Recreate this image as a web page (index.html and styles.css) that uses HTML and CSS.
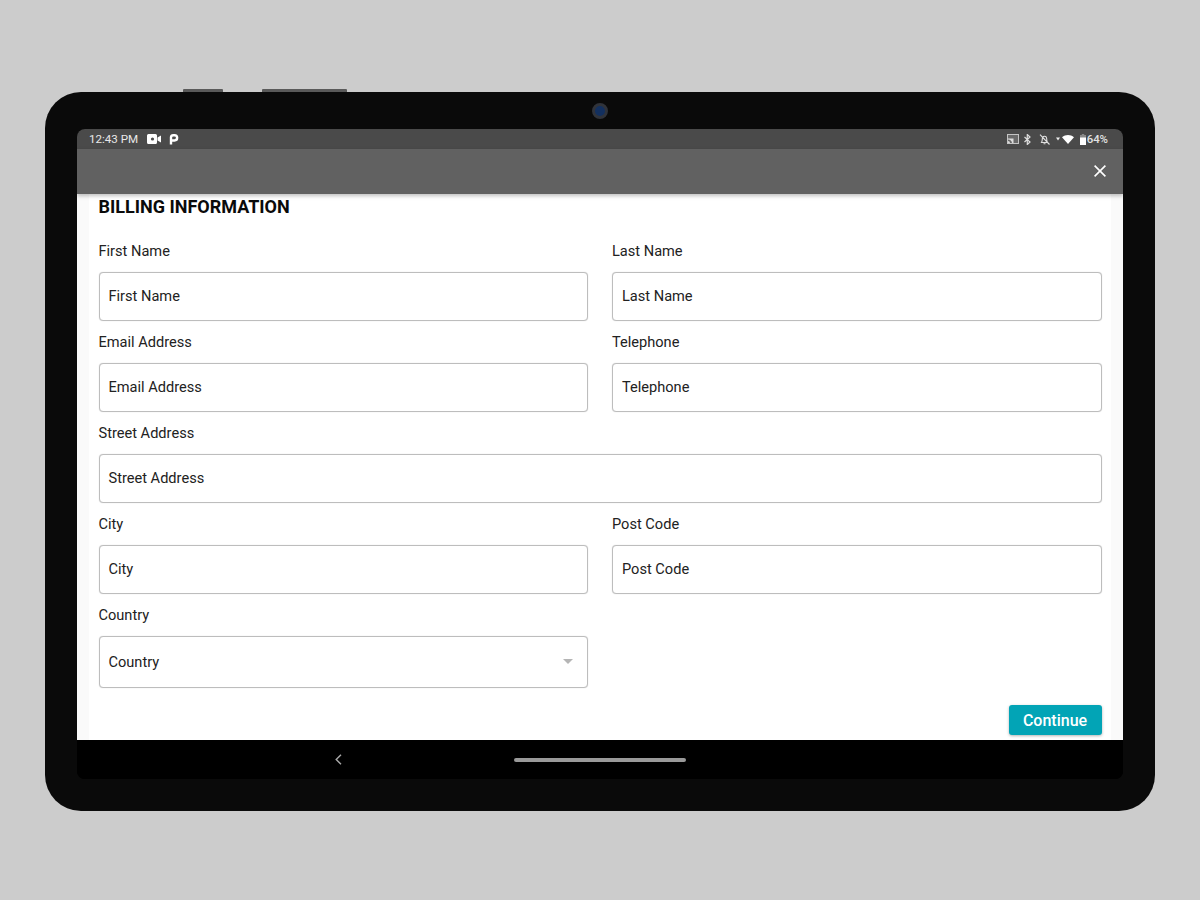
FILE: index.html
```html
<!DOCTYPE html>
<html lang="en">
<head>
<meta charset="utf-8">
<title>Billing Information</title>
<link rel="stylesheet" href="styles.css">
</head>
<body>
<div class="tablet">
  <span class="hw-btn hw-btn-a"></span>
  <span class="hw-btn hw-btn-b"></span>
  <span class="camera"></span>
  <div class="screen">
    <div class="status">
      <div class="status-left">
        <span class="time">12:43 PM</span>
        <svg class="ic-video" width="14" height="10" viewBox="0 0 14 10"><path fill="#fff" d="M1.500 0h7A1.500 1.500 0 0 1 10 1.500v7A1.500 1.500 0 0 1 8.500 10h-7A1.500 1.500 0 0 1 0 8.500v-7A1.500 1.500 0 0 1 1.500 0zM10.500 3.500 14 1.500v7l-3.500-2z"/><circle cx="5.500" cy="5" r="1.600" fill="#4a4a4a"/></svg>
        <svg class="ic-p" width="10" height="11" viewBox="0 0 10 11"><path fill="none" stroke="#fff" stroke-width="2.400" d="M2 10.500V3.200A2.200 2.200 0 0 1 4.200 1.200h1.300a2.500 2.500 0 0 1 0 5.300H3"/></svg>
      </div>
      <div class="status-right">
        <svg width="12" height="10" viewBox="0 0 12 10"><rect x=".5" y=".5" width="11" height="9" fill="#6a6a6a" stroke="#c4c4c4"/><path fill="#dcdcdc" d="M1 4.500h5.500V9H5A4 4 0 0 0 1 5.500zM1 7a2 2 0 0 1 2 2H1z"/></svg>
        <svg class="ic-bt" width="7" height="11" viewBox="0 0 7 11"><path fill="none" stroke="#ddd" stroke-width="1.200" d="M.5 3l5.500 5-2.700 2.500V.5L6 3 .5 8"/></svg>
        <svg class="ic-bell" width="11" height="11" viewBox="0 0 11 11"><path fill="none" stroke="#ddd" stroke-width="1.100" d="M2.500 8.500c.6-1 .8-1.800.8-3.500 0-1.600 1-2.800 2.200-2.800s2.200 1.200 2.200 2.800c0 1.700.2 2.500.8 3.500zM4.500 9.700h2M1 .7l9.500 9.800"/></svg>
        <svg class="ic-dot" width="4" height="4" viewBox="0 0 4 4"><path fill="#eee" d="M0 .5h4L2 3.500z"/></svg>
        <svg class="ic-wifi" width="12" height="9" viewBox="0 0 12 9"><path fill="#fff" d="M0 2.300C3.500-.7 8.500-.7 12 2.300L6 9z"/></svg>
        <svg class="ic-batt" width="6" height="11" viewBox="0 0 6 11"><path fill="#888" d="M1.800 0h2.400v1H6v4H0V1h1.800z"/><path fill="#fff" d="M0 3.500h6V11H0z"/></svg>
        <span class="pct">64%</span>
      </div>
    </div>
    <div class="appbar">
      <svg class="close" width="12" height="12" viewBox="0 0 12 12"><path stroke="#fff" stroke-width="1.600" d="M.6.600l10.800 10.800M11.400.600.600 11.400"/></svg>
    </div>
    <div class="content">
      <form class="sheet">
        <h2 class="title">BILLING INFORMATION</h2>
        <div class="grid">
          <div class="field"><label class="label">First Name</label><div class="input">First Name</div></div>
          <div class="field"><label class="label">Last Name</label><div class="input">Last Name</div></div>
          <div class="field"><label class="label">Email Address</label><div class="input">Email Address</div></div>
          <div class="field"><label class="label">Telephone</label><div class="input">Telephone</div></div>
          <div class="field wide"><label class="label">Street Address</label><div class="input">Street Address</div></div>
          <div class="field"><label class="label">City</label><div class="input">City</div></div>
          <div class="field"><label class="label">Post Code</label><div class="input">Post Code</div></div>
          <div class="field"><label class="label">Country</label><div class="input select">Country<span class="caret"></span></div></div>
        </div>
        <div class="actions"><button type="button" class="continue">Continue</button></div>
      </form>
    </div>
    <div class="nav">
      <svg class="back" width="7" height="11" viewBox="0 0 7 11"><path fill="none" stroke="#aaa" stroke-width="1.400" d="M6 .7 1.200 5.500 6 10.300"/></svg>
      <span class="home"></span>
    </div>
  </div>
</div>
</body>
</html>
```
FILE: styles.css
```css
* { box-sizing: border-box; }
html, body { margin: 0; height: 100%; }
body {
  background: #cccccc;
  padding-top: 92px;
  font-family: Roboto, "Liberation Sans", sans-serif;
  overflow: hidden;
}
.tablet {
  position: relative;
  width: 1110px;
  height: 719px;
  margin: 0 auto;
  padding: 37px 32px 32px;
  background: #0a0a0a;
  border-radius: 36px;
}
.hw-btn {
  position: absolute;
  top: -3px;
  height: 3px;
  background: #5a5a5a;
  border-radius: 1px 1px 0 0;
}
.hw-btn-a { left: 138px; width: 40px; }
.hw-btn-b { left: 217px; width: 85px; }
.camera {
  position: absolute;
  left: 547px;
  top: 11px;
  width: 16px;
  height: 16px;
  border-radius: 50%;
  background: #13305f;
  border: 3px solid #30333a;
}
.screen {
  display: flex;
  flex-direction: column;
  height: 650px;
  border-radius: 8px;
  overflow: hidden;
  background: #000;
}
.status {
  flex: none;
  height: 20px;
  display: flex;
  align-items: center;
  justify-content: space-between;
  padding: 0 15px 0 12px;
  background: #4a4a4a;
  color: #e8e8e8;
  font-size: 11.600px;
}
.status-left, .status-right { display: flex; align-items: center; }
.status svg { flex: none; }
.time { margin-right: 9px; }
.ic-p { margin-left: 8px; }
.ic-bt { margin-left: 5px; }
.ic-bell { margin-left: 8px; }
.ic-dot { margin-left: 6px; }
.ic-wifi { margin-left: 2px; }
.ic-batt { margin-left: 6px; }
.pct { margin-left: 1px; color: #e2e2e2; font-size: 11.400px; font-weight: 500; white-space: nowrap; }
.appbar {
  flex: none;
  height: 45px;
  display: flex;
  align-items: center;
  justify-content: flex-end;
  padding: 0 17px 2px;
  background: #616161;
  box-shadow: 0 2px 4px rgba(0, 0, 0, .25);
  position: relative;
  z-index: 1;
}
.content {
  flex: none;
  height: 546px;
  overflow: hidden;
  padding: 0 12px;
  background: #fafafa;
}
.sheet {
  height: 100%;
  padding: 0 9.500px;
  background: #fff;
}
.title {
  margin: 0;
  padding-top: 2px;
  height: 46px;
  font-size: 18px;
  line-height: 21px;
  font-weight: 700;
  color: #0a0a0a;
}
.grid {
  display: grid;
  grid-template-columns: 1fr 1fr;
  column-gap: 24px;
  row-gap: 10px;
}
.wide { grid-column: 1 / -1; }
.field { display: flex; flex-direction: column; }
.label {
  height: 32px;
  padding-top: 3px;
  font-size: 14.600px;
  line-height: 17px;
  color: #222;
}
.input {
  height: 49px;
  display: flex;
  align-items: center;
  padding: 0 9px 1px;
  border: 1px solid #bdbdbd;
  border-radius: 4px;
  background: #fff;
  box-shadow: 0 0 1px #c8c8c8;
  font-size: 14.600px;
  color: #222;
}
.select {
  height: 52px;
  justify-content: space-between;
  padding-right: 14px;
}
.caret {
  width: 0;
  height: 0;
  border-left: 5px solid transparent;
  border-right: 5px solid transparent;
  border-top: 5px solid #b5b5b5;
}
.actions {
  display: flex;
  justify-content: flex-end;
  margin-top: 17px;
}
.continue {
  width: 93px;
  height: 30px;
  padding: 0;
  border: 0;
  border-radius: 3px;
  background: #02a4b6;
  color: #fff;
  font: 500 16px Roboto, "Liberation Sans", sans-serif;
  box-shadow: 0 1px 3px rgba(0, 0, 0, .3);
}
.nav {
  position: relative;
  flex: none;
  height: 39px;
  display: flex;
  align-items: center;
  justify-content: center;
  background: #000;
}
.back { position: absolute; left: 258px; top: 14px; }
.home {
  width: 172px;
  height: 4px;
  border-radius: 2px;
  background: #999;
}
```
